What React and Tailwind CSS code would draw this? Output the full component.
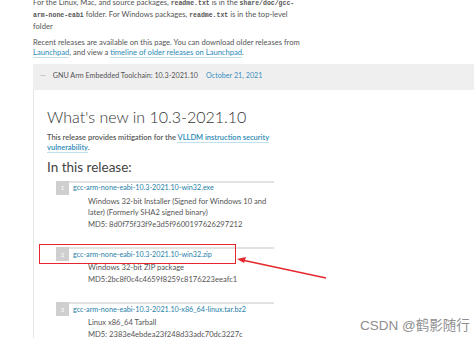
import React from 'react';

const releases = [
  {
    n: 1,
    file: 'gcc-arm-none-eabi-10.3-2021.10-win32.exe',
    lines: [
      'Windows 32-bit Installer (Signed for Windows 10 and',
      'later) (Formerly SHA2 signed binary)',
      'MD5: 8d0f75f33f9e3d5f9600197626297212',
    ],
  },
  {
    n: 2,
    file: 'gcc-arm-none-eabi-10.3-2021.10-win32.zip',
    lines: ['Windows 32-bit ZIP package', 'MD5:2bc8f0c4c4659f8259c8176223eeafc1'],
  },
  {
    n: 3,
    file: 'gcc-arm-none-eabi-10.3-2021.10-x86_64-linux.tar.bz2',
    lines: ['Linux x86_64 Tarball', 'MD5: 2383e4ebdea23f248d33adc70dc3227c'],
  },
];

const Code = ({ children }) => (
  <span className="font-['Liberation_Mono',monospace] text-[6.5px] font-bold text-[#555]">{children}</span>
);

const ReleaseItem = ({ item }) => (
  <div className="w-[218px]">
    <div className="flex">
      <div className="flex h-[14px] w-[13px] items-center justify-center bg-[#cfcfcf] text-[6px] text-white">
        {item.n}
      </div>
      <div className="flex h-[14px] flex-1 items-center border-t-2 border-[#e2e2e2] pl-[4px] text-[7.2px] text-[#1f7fa8]">
        {item.file}
      </div>
    </div>
    <div className="pl-[32px] pt-[1px] text-[7.6px] leading-[11.5px] text-[#555]">
      {item.lines.map((l) => (
        <p key={l}>{l}</p>
      ))}
    </div>
  </div>
);

export default function App() {
  return (
    <div className="relative h-[338px] w-[474px] overflow-hidden bg-white font-['Lato','Open_Sans',sans-serif]">
      <div className="mt-[-3.5px] pl-[33px] text-[7.6px] text-[#555]">
        <p className="w-[280px] leading-[11px]">
          For the Linux, Mac, and source packages, <Code>readme.txt</Code> is in the <Code>share/doc/gcc-</Code>
          <br />
          <Code>arm-none-eabi</Code> folder. For Windows packages, <Code>readme.txt</Code> is in the top-level
          <br />
          folder
        </p>
        <p className="mt-[5px] leading-[10.5px]">
          Recent releases are available on this page. You can download older releases from
          <br />
          <span className="border-b border-[#bfe0ee] text-[#2a8ab5]">Launchpad</span>, and view a{' '}
          <span className="border-b border-[#bfe0ee] text-[#2a8ab5]">timeline of older releases on Launchpad</span>.
        </p>
      </div>

      <div className="ml-[33px] mt-[6px]">
        <div className="flex h-[26px] items-center gap-[7px] bg-[#efefef] pl-[7px] text-[7.2px] text-[#555]">
          <span className="text-[#aaa]">—</span>
          <span>GNU Arm Embedded Toolchain: 10.3-2021.10</span>
          <span className="ml-[1px] text-[#3b8fc0]">October 21, 2021</span>
        </div>

        <div className="h-[260px] border-l border-[#e6e6e6] pl-[13px] pt-[17px]">
          <h2 className="text-[16px] font-light leading-[20px] text-[#333]">What's new in 10.3-2021.10</h2>
          <p className="mt-[6px] w-[240px] text-[7.5px] font-semibold leading-[10.5px] text-[#555]">
            This release provides mitigation for the{' '}
            <span className="border-b border-[#bfe0ee] text-[#2a8ab5]">VLLDM instruction security</span>
            <br />
            <span className="border-b border-[#bfe0ee] text-[#2a8ab5]">vulnerability</span>.
          </p>
          <h3 className="mt-[4px] text-[13.5px] leading-[18px] text-[#444]">In this release:</h3>
          <div className="ml-[9px] mt-[5px] flex flex-col gap-[17px]">
            {releases.map((r) => (
              <ReleaseItem key={r.n} item={r} />
            ))}
          </div>
        </div>
      </div>

      <div className="absolute left-[39px] top-[244px] h-[20px] w-[197px] border-[1.5px] border-[#e5262d]" />
      <svg className="absolute left-0 top-0" width="474" height="338">
        <line x1="326" y1="278" x2="242" y2="260" stroke="#e5262d" strokeWidth="1.3" />
        <polygon points="237,259 246,257 244,263" fill="#e5262d" />
      </svg>

      <div className="absolute left-[360px] top-[317px] whitespace-nowrap font-['Liberation_Sans','Noto_Sans_CJK_SC',sans-serif] text-[13.5px] leading-[18px] text-[#8e8e8e]">
        CSDN @鹤影随行
      </div>
    </div>
  );
}
